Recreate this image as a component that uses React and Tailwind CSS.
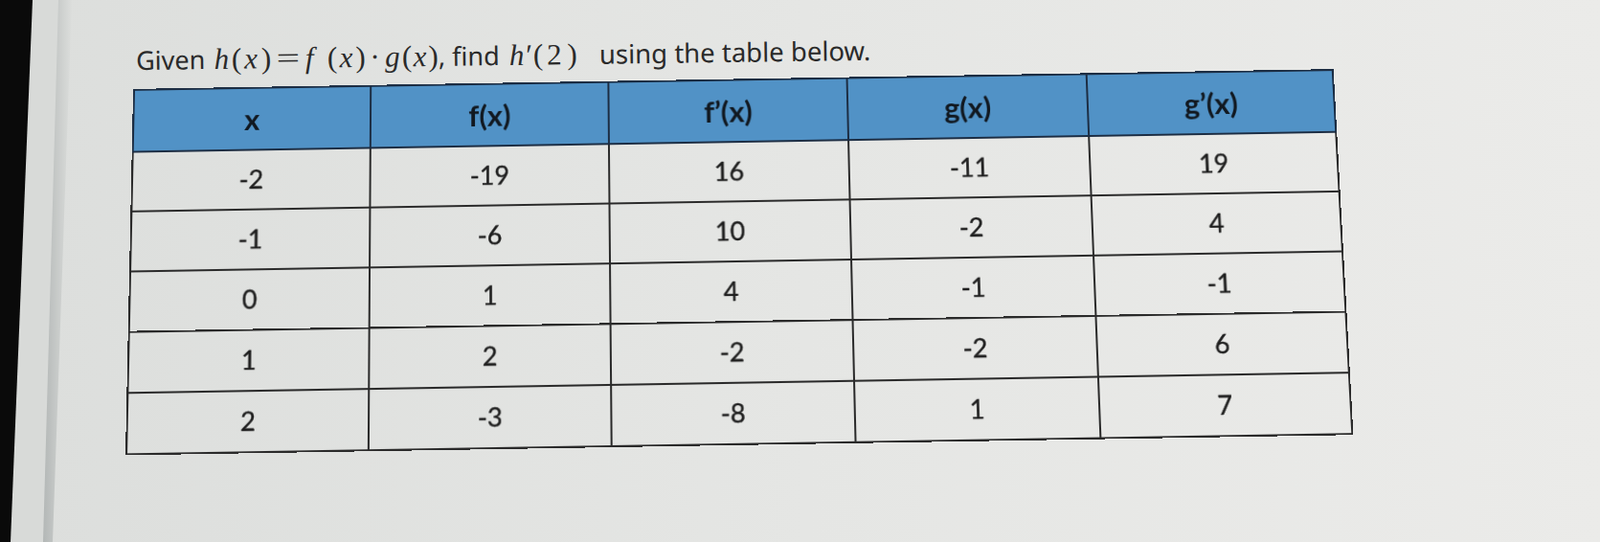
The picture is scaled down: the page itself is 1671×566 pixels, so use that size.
export default function App() {
  const header = ["x", "f(x)", "f’(x)", "g(x)", "g’(x)"];
  const rows = [
    ["-2", "-19", "16", "-11", "19"],
    ["-1", "-6", "10", "-2", "4"],
    ["0", "1", "4", "-1", "-1"],
    ["1", "2", "-2", "-2", "6"],
    ["2", "-3", "-8", "1", "7"],
  ];
  const widths = ["w-[250px]", "w-[251px]", "w-[252px]", "w-[253px]", "w-[260px]"];
  const serif = "font-['Liberation_Serif',serif]";
  return (
    <div className="flex w-[1671px] h-[566px] overflow-hidden bg-linear-to-r from-[#dcdedc] via-[#e5e6e4] to-[#ebebe9]">
      <svg width="80" height="566" viewBox="0 0 80 566" className="shrink-0">
        <defs>
          <linearGradient id="sh" x1="0" y1="0" x2="1" y2="0">
            <stop offset="0" stopColor="#b3b7b6" />
            <stop offset="1" stopColor="#dcdedc" />
          </linearGradient>
        </defs>
        <polygon points="34,0 63,0 47,566 11,566" fill="#d8dad8" />
        <polygon points="61,0 75,0 55,566 45,566" fill="url(#sh)" />
        <polygon points="0,0 34,0 11,566 0,566" fill="#0a0a0a" />
      </svg>
      <div className="flex flex-col">
        <div className="mt-[45px] ml-[62px] flex items-baseline h-[36px] leading-[36px] text-[#2a2a2a] origin-left [transform:rotate(-0.75deg)] whitespace-nowrap">
          <span className="w-[80px] shrink-0 text-[27px] font-['Noto_Sans',sans-serif]">Given</span>
          <span className={`w-[19px] shrink-0 text-center italic text-[31px] ${serif}`}>h</span>
          <span className={`w-[12px] shrink-0 text-center text-[31px] ${serif}`}>(</span>
          <span className={`w-[18px] shrink-0 text-center italic text-[31px] ${serif}`}>x</span>
          <span className={`w-[14px] shrink-0 text-center text-[31px] ${serif}`}>)</span>
          <span className={`w-[32px] shrink-0 text-center text-[31px] scale-x-[1.4] ${serif}`}>=</span>
          <span className={`w-[24px] shrink-0 pl-[2px] text-left italic text-[31px] ${serif}`}>f</span>
          <span className={`w-[12px] shrink-0 text-center text-[31px] ${serif}`}>(</span>
          <span className={`w-[17px] shrink-0 text-center italic text-[31px] ${serif}`}>x</span>
          <span className={`w-[13px] shrink-0 text-center text-[31px] ${serif}`}>)</span>
          <span className={`w-[17px] shrink-0 text-center text-[31px] ${serif}`}>·</span>
          <span className={`w-[20px] shrink-0 text-center italic text-[31px] ${serif}`}>g</span>
          <span className={`w-[10px] shrink-0 text-center text-[31px] ${serif}`}>(</span>
          <span className={`w-[17px] shrink-0 text-center italic text-[31px] ${serif}`}>x</span>
          <span className={`w-[11px] shrink-0 text-center text-[31px] ${serif}`}>)</span>
          <span className="w-[72px] shrink-0 text-[27px] font-['Noto_Sans',sans-serif]">, find</span>
          <span className={`w-[26px] shrink-0 text-center italic text-[31px] ${serif}`}>h′</span>
          <span className={`w-[12px] shrink-0 text-center text-[31px] ${serif}`}>(</span>
          <span className={`w-[22px] shrink-0 text-center text-[31px] ${serif}`}>2</span>
          <span className={`w-[15px] shrink-0 text-center text-[31px] ${serif}`}>)</span>
          <span className="ml-[21px] text-[27.5px] font-['Noto_Sans',sans-serif]">using the table below.</span>
        </div>
        <table className="ml-[55px] mt-[-1px] w-[1266px] table-fixed border-collapse font-['Lato',sans-serif] [transform:perspective(1000px)_rotate(-0.95deg)_rotateX(3.4deg)]">
          <colgroup>
            {widths.map((w, i) => (
              <col key={i} className={w} />
            ))}
          </colgroup>
          <thead>
            <tr className="h-[66px]">
              {header.map((h, i) => (
                <th
                  key={i}
                  className="border-2 border-[#1c2d43] bg-[#5192c6] text-[31px] font-bold text-[#111820] text-center align-middle"
                >
                  {h}
                </th>
              ))}
            </tr>
          </thead>
          <tbody>
            {rows.map((r, ri) => (
              <tr key={ri} className="h-[63px]">
                {r.map((c, ci) => (
                  <td
                    key={ci}
                    className="border-2 border-[#2a2a2a] text-[27px] text-[#1e1e1e] [-webkit-text-stroke:0.4px_#1e1e1e] text-center align-middle"
                  >
                    {c}
                  </td>
                ))}
              </tr>
            ))}
          </tbody>
        </table>
      </div>
    </div>
  );
}
